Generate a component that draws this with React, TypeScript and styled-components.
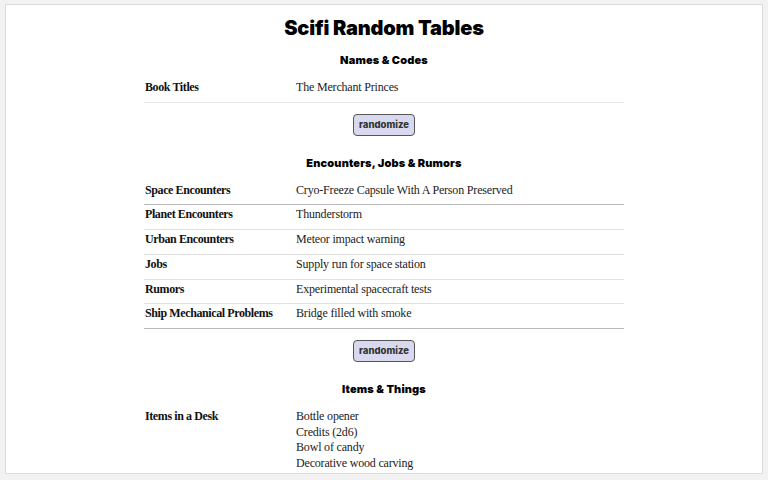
import React from "react";
import styled, { createGlobalStyle } from "styled-components";

const Global = createGlobalStyle`
  html, body { margin: 0; padding: 0; }
  body {
    background: #f2f2f2;
    font-family: "Liberation Serif", "DejaVu Serif", serif;
    color: #111;
  }
`;

const Page = styled.div`
  padding: 4px 5px 0 5px;
  height: 480px;
  box-sizing: border-box;
`;

const Card = styled.main`
  background: #fff;
  border: 1px solid #dcdcdc;
  height: 470px;
  box-sizing: border-box;
  overflow: hidden;
  padding-top: 11px;
`;

const Title = styled.h1`
  margin: 0 0 13px;
  text-align: center;
  font-family: Inter, "DejaVu Sans", sans-serif;
  font-weight: 900;
  font-size: 20px;
  line-height: 24px;
  letter-spacing: -0.2px;
  color: #000;
`;

const SectionTitle = styled.h2`
  margin: 0 0 11px;
  text-align: center;
  font-family: Inter, "DejaVu Sans", sans-serif;
  font-weight: 900;
  font-size: 11px;
  line-height: 14px;
  letter-spacing: 0.15px;
  color: #000;
`;

const Table = styled.div`
  width: 480px;
  margin: 0 auto;
  display: flex;
  flex-direction: column;
`;

const Row = styled.div<{ $line: string }>`
  display: grid;
  grid-template-columns: 151px 1fr;
  padding: 2px 0 6px 1px;
  border-bottom: 1px solid ${(p) => p.$line};
  font-size: 12px;
  line-height: 15.7px;
`;

const PlainRow = styled(Row)`
  border-bottom: none;
`;

const Label = styled.div`
  font-weight: bold;
  letter-spacing: -0.4px;
`;

const Value = styled.div`
  color: #222;
  letter-spacing: -0.18px;
`;

const ButtonBar = styled.div`
  display: flex;
  justify-content: center;
  margin: 11px 0 20px;
`;

const Button = styled.button`
  width: 62px;
  height: 22px;
  padding: 0;
  background: #d8d9ee;
  border: 1px solid #555;
  border-radius: 4px;
  font-family: Inter, "DejaVu Sans", sans-serif;
  font-weight: 800;
  font-size: 9.5px;
  color: #333;
  cursor: pointer;
`;

type Entry = { label: string; value: string };

const encounters: Entry[] = [
  { label: "Space Encounters", value: "Cryo-Freeze Capsule With A Person Preserved" },
  { label: "Planet Encounters", value: "Thunderstorm" },
  { label: "Urban Encounters", value: "Meteor impact warning" },
  { label: "Jobs", value: "Supply run for space station" },
  { label: "Rumors", value: "Experimental spacecraft tests" },
  { label: "Ship Mechanical Problems", value: "Bridge filled with smoke" },
];

const deskItems = ["Bottle opener", "Credits (2d6)", "Bowl of candy", "Decorative wood carving"];

function lineColor(i: number, n: number) {
  return i === 0 || i === n - 1 ? "#b9b9b9" : "#e2e2e2";
}

export default function App() {
  return (
    <>
      <Global />
      <Page>
        <Card>
          <Title>Scifi Random Tables</Title>

          <SectionTitle>Names &amp; Codes</SectionTitle>
          <Table>
            <Row $line="#e6e6e6">
              <Label>Book Titles</Label>
              <Value>The Merchant Princes</Value>
            </Row>
          </Table>
          <ButtonBar>
            <Button>randomize</Button>
          </ButtonBar>

          <SectionTitle>Encounters, Jobs &amp; Rumors</SectionTitle>
          <Table>
            {encounters.map((e, i) => (
              <Row key={e.label} $line={lineColor(i, encounters.length)}>
                <Label>{e.label}</Label>
                <Value>{e.value}</Value>
              </Row>
            ))}
          </Table>
          <ButtonBar>
            <Button>randomize</Button>
          </ButtonBar>

          <SectionTitle>Items &amp; Things</SectionTitle>
          <Table>
            <PlainRow $line="transparent">
              <Label>Items in a Desk</Label>
              <Value>
                {deskItems.map((d) => (
                  <div key={d}>{d}</div>
                ))}
              </Value>
            </PlainRow>
          </Table>
        </Card>
      </Page>
    </>
  );
}
